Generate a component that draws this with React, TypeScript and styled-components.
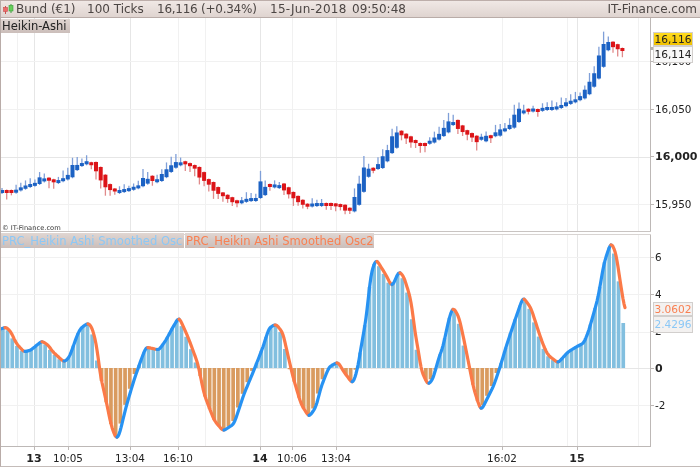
import React from "react";
import styled, { createGlobalStyle } from "styled-components";

const GlobalStyle = createGlobalStyle`
  html, body { margin: 0; padding: 0; background: #fff; }
  #root { width: 700px; height: 467px; overflow: hidden; }
`;

type Pt = [number, number];

const priceKnots: Pt[] = [
  [0,190],[8,190],[15,190.5],[22,187],[30,184],[35,184],[38,177],[44,178],[50,181],[56,181],[62,179],[68,176],[72,165],[78,165],[87,161],[91,163],[97,172],[104,186],[110,190],[116,191],[120,190],[130,188],[140,185],[145,175],[150,181],[156,181],[165,171],[172,165],[178,161],[185,164],[195,168],[200,178],[208,183],[215,192],[225,197],[234,203],[240,201],[246,199],[252,198],[258,198],[260,180],[265,187],[272,186],[278,183],[284,190],[290,195],[296,200],[302,205],[308,204],[318,203],[326,203],[340,205],[347,212],[351,208],[355,197],[360,183],[364,167],[370,169],[375,169],[380,162],[385,153],[390,148],[394,130],[398,133],[405,137],[412,143],[418,143],[425,144],[433,139],[442,132],[447,123],[452,119],[457,128],[463,132],[472,137],[478,143],[483,135],[492,137],[498,130],[507,128],[512,123],[513,117],[520,108],[527,112],[532,108],[538,110],[545,107],[553,107],[560,106],[567,102],[577,99],[582,95],[587,87],[595,73],[600,53],[605,42],[608,41],[613,47],[620,50],[625,49]
];

const oscKnots: Pt[] = [
  [0,329],[5,327],[10,332],[15,343],[23,352],[30,350],[36,345],[41,341],[47,345],[52,352],[63,362],[68,358],[72,347],[77,333],[80,328],[87,323],[91,327],[96,347],[99,374],[105,400],[110,425],[115,439],[118,436],[125,407],[133,380],[140,360],[145,347],[158,350],[165,340],[172,327],[178,317],[187,337],[197,364],[203,394],[213,420],[222,431],[233,424],[243,394],[253,370],[262,347],[268,328],[275,324],[282,333],[285,347],[292,377],[300,404],[308,417],[315,407],[320,387],[328,367],[337,362],[343,372],[352,384],[357,367],[360,347],[365,320],[370,273],[375,259],[385,275],[391,287],[398,271],[403,277],[410,300],[415,340],[417,347],[420,370],[427,385],[432,379],[438,357],[442,347],[447,323],[450,312],[452,307],[458,317],[463,340],[465,350],[473,390],[480,411],[493,385],[500,364],[505,347],[513,323],[522,297],[530,308],[538,333],[543,347],[547,355],[557,363],[567,352],[575,347],[583,343],[588,330],[597,298],[603,263],[610,242],[615,253],[620,287],[624,311]
];

const interpolator = (pts: Pt[]) => (x: number) => {
  const n = pts.length;
  if (x <= pts[0][0]) return pts[0][1];
  if (x >= pts[n - 1][0]) return pts[n - 1][1];
  let i = 0;
  while (pts[i + 1][0] < x) i++;
  const t = (x - pts[i][0]) / (pts[i + 1][0] - pts[i][0]);
  return pts[i][1] + (pts[i + 1][1] - pts[i][1]) * t;
};

const smoothed = (f: (x: number) => number, radius: number) => (x: number) => {
  let sum = 0;
  let weight = 0;
  for (let k = -radius; k <= radius; k += 0.5) {
    const w = radius + 0.5 - Math.abs(k);
    sum += f(x + k) * w;
    weight += w;
  }
  return sum / weight;
};

const priceAt = smoothed(interpolator(priceKnots), 1);
const oscAt = smoothed(interpolator(oscKnots), 3);
const rand = (i: number) => {
  const v = Math.sin(i * 12.9898) * 43758.5453;
  return v - Math.floor(v);
};

const STEP = 4.7;
const barXs = Array.from({ length: 133 }, (_, i) => 2 + i * STEP);

const MAIN_TOP = 18;
const OSC_TOP = 235;
const ZERO = 368;

const gridX = [17, 34, 68, 130, 178, 205, 260, 292, 336, 502, 567, 577, 638];
const strongX = [34, 130, 260, 577];
const mainGridY = [61, 109, 157, 204];
const oscGridY = [257, 294, 332, 368, 405];

const oscSegments = () => {
  const segs: { d: string; up: boolean }[] = [];
  let cur: string[] = [];
  let up = oscAt(1) < oscAt(0);
  for (let x = 0; x <= 624; x += 1) {
    const y = oscAt(x);
    cur.push(`${x},${y.toFixed(1)}`);
    const nextUp = oscAt(x + 1) < y;
    if (x < 624 && nextUp !== up) {
      segs.push({ d: "M" + cur.join("L"), up });
      cur = [`${x},${y.toFixed(1)}`];
      up = nextUp;
    }
  }
  segs.push({ d: "M" + cur.join("L"), up });
  return segs;
};

const Page = styled.div`
  position: relative;
  display: flex;
  flex-direction: column;
  width: 700px;
  height: 467px;
  box-sizing: border-box;
  border-left: 1px solid #b9aca8;
  border-bottom: 1px solid #c4bcb9;
  background: #fff;
  font-family: "DejaVu Sans", sans-serif;
  overflow: hidden;
  filter: blur(0.4px);
`;

const TitleBar = styled.header`
  display: flex;
  align-items: center;
  height: 18px;
  box-sizing: border-box;
  flex: none;
  padding: 0 3px 0 1px;
  border-top: 1px solid #bdaeaa;
  border-bottom: 1px solid #b9aca8;
  background: linear-gradient(#f0e8e5, #dfd4d0);
  color: #4c4644;
  font-size: 12px;
  white-space: nowrap;
`;

const TitleItem = styled.span<{ $w: number; $ls?: number }>`
  display: block;
  width: ${(p) => p.$w}px;
  flex: none;
  letter-spacing: ${(p) => p.$ls ?? 0}px;
`;

const Brand = styled.span`
  margin-left: auto;
`;

const Panel = styled.section<{ $h: number }>`
  position: relative;
  display: flex;
  flex: none;
  height: ${(p) => p.$h}px;
`;

const Plot = styled.svg`
  display: block;
  flex: none;
  width: 649px;
  height: 100%;
`;

const Axis = styled.svg`
  display: block;
  flex: none;
  width: 50px;
  height: 100%;
`;

const Divider = styled.div`
  flex: none;
  height: 4px;
  width: 650px;
  box-sizing: border-box;
  border-top: 1px solid #c9c4c2;
  border-bottom: 1px solid #d8d4d2;
`;

const Legends = styled.div<{ $top: number }>`
  position: absolute;
  left: 0;
  top: ${(p) => p.$top}px;
  display: flex;
  gap: 1px;
`;

const Legend = styled.div<{ $color: string; $w: number; $h: number }>`
  width: ${(p) => p.$w}px;
  height: ${(p) => p.$h}px;
  line-height: ${(p) => p.$h + 1}px;
  padding-left: 1px;
  box-sizing: border-box;
  font-size: 11.55px;
  white-space: nowrap;
  color: ${(p) => p.$color};
  background: linear-gradient(#e0d6d2, #cbbeba);
`;

const PriceTag = styled.div<{ $top: number; $h: number; $bg: string; $color: string; $size: number }>`
  position: absolute;
  left: 652px;
  top: ${(p) => p.$top}px;
  width: 40px;
  height: ${(p) => p.$h}px;
  line-height: ${(p) => p.$h - 2}px;
  box-sizing: border-box;
  text-align: center;
  font-size: ${(p) => p.$size}px;
  color: ${(p) => p.$color};
  background: ${(p) => p.$bg};
  border: 1px solid #d2cfcd;
`;

const LastMarker = styled.div`
  position: absolute;
  left: 649px;
  top: 29px;
  width: 3px;
  height: 3px;
  background: #b4b0ae;
`;

const TimeAxis = styled.svg`
  display: block;
  flex: none;
  width: 699px;
  height: 20px;
`;

const AxisLine = styled.line`
  stroke: #bdb8b6;
  stroke-width: 1;
`;

const Grid = ({ ys, top, height }: { ys: number[]; top: number; height: number }) => (
  <g>
    {gridX.map((x) => (
      <line key={x} x1={x - 0.5} x2={x - 0.5} y1={0} y2={height} stroke={strongX.includes(x) ? "#e6e6e6" : "#f1f1f1"} />
    ))}
    {ys.map((y) => (
      <line key={y} x1={0} x2={649} y1={y - top + 0.5} y2={y - top + 0.5} stroke={y === 157 || y === 368 ? "#e6e6e6" : "#f1f1f1"} />
    ))}
  </g>
);

const Candles = () => (
  <g transform={`translate(-1 ${-MAIN_TOP})`}>
    {barXs.map((x, i) => {
      const o = priceAt(x - STEP * 1.5);
      const c = priceAt(x + 0.5);
      const up = c <= o;
      const top = Math.min(o, c);
      const bottom = Math.max(o, c);
      const body = Math.max(bottom - top, 3);
      const wick = 2 + rand(i) * 5 + (bottom - top) * 0.25;
      const color = up ? "#1c62c4" : "#dc1418";
      const wickColor = up ? "#7f9fd8" : "#e08a8a";
      return (
        <g key={i}>
          <line
            x1={x}
            x2={x}
            y1={up ? top - wick : top - 0.5}
            y2={up ? top + body + 1 : top + body + wick}
            stroke={wickColor}
            strokeWidth={1.3}
          />
          <rect x={x - 2} y={top} width={4} height={body} fill={color} />
        </g>
      );
    })}
  </g>
);

const Oscillator = () => (
  <g transform={`translate(0 ${-OSC_TOP})`}>
    {barXs.map((x, i) => {
      const a = oscAt(x);
      const b = oscAt(x + 1.5);
      const y = x > 620 ? 323 : Math.abs(a - ZERO) < Math.abs(b - ZERO) ? a : b;
      return (
        <rect
          key={i}
          x={x - 2}
          y={Math.min(y, ZERO)}
          width={3.7}
          height={Math.abs(y - ZERO)}
          fill={y < ZERO ? "#82bfdf" : "#d99b5f"}
        />
      );
    })}
    {oscSegments().map((s, i) => (
      <path key={i} d={s.d} fill="none" stroke={s.up ? "#2792f2" : "#fb7a48"} strokeWidth={3.2} strokeLinejoin="round" strokeLinecap="round" />
    ))}
  </g>
);

const AxisLabel = styled.text<{ $bold?: boolean }>`
  font-family: "DejaVu Sans", sans-serif;
  font-size: ${(p) => (p.$bold ? 11 : 10.4)}px;
  font-weight: ${(p) => (p.$bold ? 700 : 400)};
  fill: #222;
  dominant-baseline: central;
`;

const mainLabels = [
  { y: 61, t: "16,100" },
  { y: 109, t: "16,050" },
  { y: 156, t: "16,000", bold: true },
  { y: 204, t: "15,950" },
];
const oscLabels = [
  { y: 257, t: "6" },
  { y: 294, t: "4" },
  { y: 331, t: "2" },
  { y: 368, t: "0", bold: true },
  { y: 405, t: "-2" },
];
const timeLabels = [
  { x: 34, t: "13", bold: true },
  { x: 68, t: "10:05" },
  { x: 130, t: "13:04" },
  { x: 178, t: "16:10" },
  { x: 260, t: "14", bold: true },
  { x: 292, t: "10:06" },
  { x: 336, t: "13:04" },
  { x: 502, t: "16:02" },
  { x: 577, t: "15", bold: true },
];

const IconSvg = styled.svg`
  flex: none;
  margin-right: 2px;
`;

const CandleIcon = () => (
  <IconSvg width="12" height="12" viewBox="0 0 12 12">
    <path d="M3.5 3v8" stroke="#c9504e" />
    <rect x="1.5" y="4.5" width="4" height="4" fill="#ee6a6a" stroke="#c9504e" strokeWidth="0.6" />
    <path d="M9 1v9" stroke="#3f9f3f" />
    <rect x="7" y="2.5" width="4" height="5.5" fill="#66d05a" stroke="#3f9f3f" strokeWidth="0.6" />
  </IconSvg>
);

const Copyright = styled.div`
  position: absolute;
  left: 1px;
  bottom: -2px;
  font-size: 6.7px;
  line-height: 9px;
  color: #333;
`;

export default function App() {
  return (
    <Page>
      <GlobalStyle />
      <TitleBar>
        <CandleIcon />
        <TitleItem $w={71}>Bund (€1)</TitleItem>
        <TitleItem $w={70}>100 Ticks</TitleItem>
        <TitleItem $w={113} $ls={-0.25}>16,116 (+0.34%)</TitleItem>
        <TitleItem $w={82} $ls={0.25}>15-Jun-2018</TitleItem>
        <TitleItem $w={60}>09:50:48</TitleItem>
        <Brand>IT-Finance.com</Brand>
      </TitleBar>

      <Panel $h={213}>
        <Plot viewBox="0 0 649 213">
          <Grid ys={mainGridY} top={MAIN_TOP} height={213} />
          <Candles />
        </Plot>
        <Axis viewBox="0 0 50 213">
          <AxisLine x1={0.5} x2={0.5} y1={0} y2={213} />
          {mainLabels.map((l) => (
            <g key={l.t}>
              <AxisLine x1={0} x2={4} y1={l.y - MAIN_TOP + 0.5} y2={l.y - MAIN_TOP + 0.5} />
              <AxisLabel x={5} y={l.y - MAIN_TOP} $bold={l.bold}>
                {l.t}
              </AxisLabel>
            </g>
          ))}
        </Axis>
        <Legends $top={1}>
          <Legend $color="#222" $w={69} $h={14}>Heikin-Ashi</Legend>
        </Legends>
        <LastMarker />
        <PriceTag $top={14} $h={14} $bg="linear-gradient(#ffdc1e, #f0c000)" $color="#222" $size={10.6}>16,116</PriceTag>
        <PriceTag $top={28} $h={17} $bg="#f8f8f8" $color="#222" $size={10.6}>16,114</PriceTag>
        <Copyright>© IT-Finance.com</Copyright>
      </Panel>

      <Divider />

      <Panel $h={212}>
        <Plot viewBox="0 0 649 212">
          <Grid ys={oscGridY} top={OSC_TOP} height={212} />
          <Oscillator />
          <AxisLine x1={0} x2={649} y1={211.5} y2={211.5} />
        </Plot>
        <Axis viewBox="0 0 50 212">
          <AxisLine x1={0.5} x2={0.5} y1={0} y2={212} />
          {oscLabels.map((l) => (
            <g key={l.t}>
              <AxisLine x1={0} x2={4} y1={l.y - OSC_TOP + 0.5} y2={l.y - OSC_TOP + 0.5} />
              <AxisLabel x={5} y={l.y - OSC_TOP} $bold={l.bold}>
                {l.t}
              </AxisLabel>
            </g>
          ))}
        </Axis>
        <Legends $top={-2}>
          <Legend $color="#8cc8f6" $w={183} $h={15}>PRC_Heikin Ashi Smoothed Osc</Legend>
          <Legend $color="#f98052" $w={189} $h={15}>PRC_Heikin Ashi Smoothed Osc2</Legend>
        </Legends>
        <PriceTag $top={67} $h={14} $bg="#f3f1f0" $color="#f98052" $size={10.6}>3.0602</PriceTag>
        <PriceTag $top={81} $h={17} $bg="#f3f1f0" $color="#8cc8f6" $size={10.6}>2.4296</PriceTag>
      </Panel>

      <TimeAxis viewBox="0 0 699 20">
        {timeLabels.map((l) => (
          <g key={l.t + l.x}>
            <AxisLine x1={l.x - 0.5} x2={l.x - 0.5} y1={0} y2={3} />
            <AxisLabel x={l.x - 1} y={11} $bold={l.bold} textAnchor="middle">
              {l.t}
            </AxisLabel>
          </g>
        ))}
      </TimeAxis>
    </Page>
  );
}
